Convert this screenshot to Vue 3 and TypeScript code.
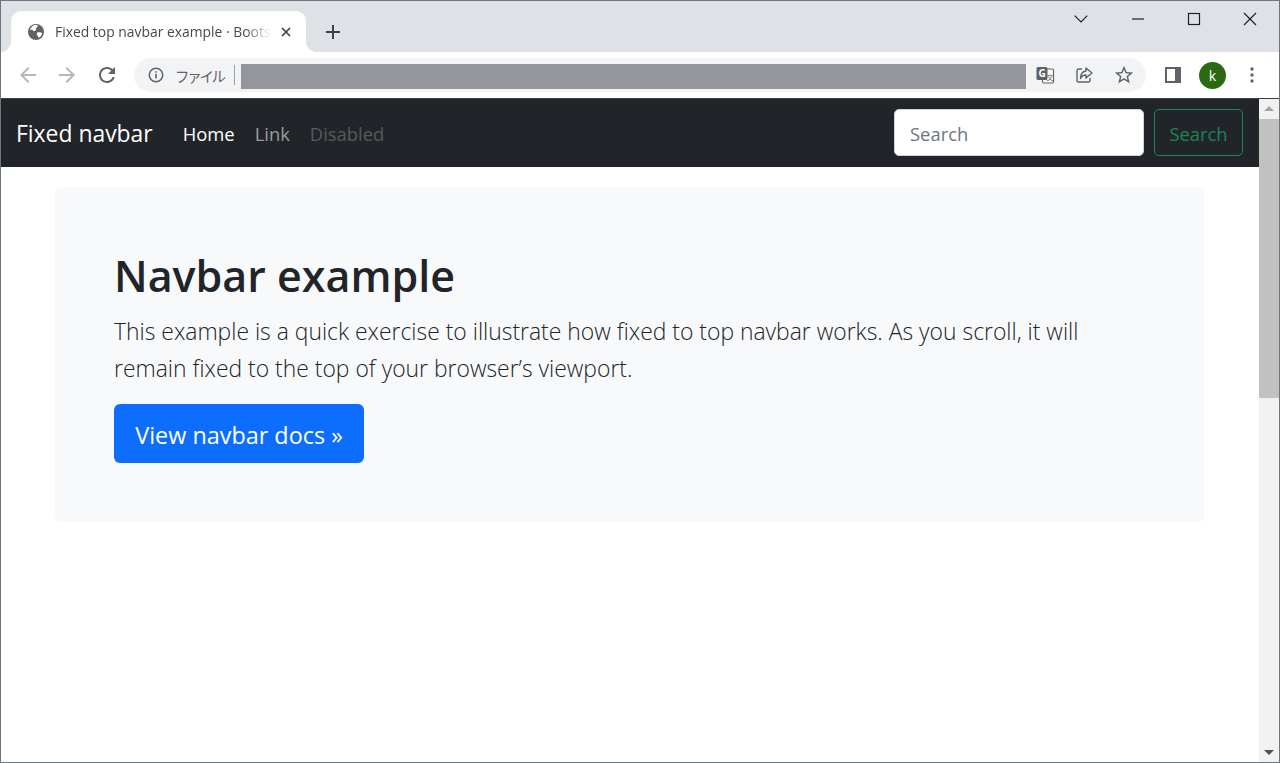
<script setup lang="ts">
const navLinks = [
  { label: 'Home', state: 'active' },
  { label: 'Link', state: '' },
  { label: 'Disabled', state: 'disabled' }
]
</script>

<template>
  <div class="window">
    <div class="tabstrip">
      <div class="tab">
        <svg class="favicon" viewBox="0 0 16 16" width="16" height="16">
          <circle cx="8" cy="8" r="8" fill="#5f6368" />
          <path d="M6.6 1.1 9.4 1 9.6 2.700 7.700 4.600 8.300 6 5.700 7.200 4 5.600 2 6.200C2.600 3.700 4.300 1.800 6.600 1.100zM9.500 8.300h3.200l1.500 1.200c-.5 1.900-1.700 3.300-3.400 4.200L9.700 12 8.700 10z" fill="#fff" />
        </svg>
        <span class="tab-title">Fixed top navbar example · Boots</span>
        <svg class="tab-close" viewBox="0 0 10 10" width="10" height="10">
          <path d="M1 1l8 8M9 1l-8 8" stroke="#3c4043" stroke-width="1.700" />
        </svg>
      </div>
      <svg class="new-tab" viewBox="0 0 16 16" width="16" height="16">
        <path d="M8 1v14M1 8h14" stroke="#3c4043" stroke-width="2" />
      </svg>
      <div class="window-controls">
        <svg class="ctl ctl-menu" viewBox="0 0 14 8" width="14" height="8">
          <path d="M.7.7 7 7 13.300.7" fill="none" stroke="#202124" stroke-width="1.200" />
        </svg>
        <svg class="ctl" viewBox="0 0 14 14" width="14" height="14">
          <path d="M1 7h12" stroke="#202124" stroke-width="1.200" />
        </svg>
        <svg class="ctl" viewBox="0 0 14 14" width="14" height="14">
          <rect x="1.500" y="1.500" width="11" height="11" fill="none" stroke="#202124" stroke-width="1.200" />
        </svg>
        <svg class="ctl" viewBox="0 0 14 14" width="14" height="14">
          <path d="M1 1l12 12M13 1 1 13" stroke="#202124" stroke-width="1.200" />
        </svg>
      </div>
    </div>

    <div class="toolbar">
      <svg class="tool" viewBox="0 0 24 24" width="24" height="24">
        <path d="M20 11H7.830l5.590-5.590L12 4l-8 8 8 8 1.410-1.410L7.830 13H20v-2z" fill="#b5b7ba" />
      </svg>
      <svg class="tool" viewBox="0 0 24 24" width="24" height="24">
        <path d="M12 4l-1.410 1.410L16.170 11H4v2h12.170l-5.580 5.590L12 20l8-8z" fill="#b5b7ba" />
      </svg>
      <svg class="tool tool-reload" viewBox="0 0 24 24" width="24" height="24">
        <path d="M17.650 6.350C16.200 4.900 14.210 4 12 4c-4.420 0-7.990 3.580-7.990 8s3.570 8 7.990 8c3.730 0 6.840-2.550 7.730-6h-2.080c-.82 2.330-3.040 4-5.650 4-3.310 0-6-2.690-6-6s2.690-6 6-6c1.660 0 3.140.69 4.220 1.780L13 11h7V4l-2.350 2.350z" fill="#5f6368" />
      </svg>
      <div class="omnibox">
        <svg class="info" viewBox="0 0 16 16" width="16" height="16">
          <circle cx="8" cy="8" r="6.700" fill="none" stroke="#5f6368" stroke-width="1.500" />
          <path d="M7.200 7h1.600v4.600H7.200zM7.200 4.200h1.600v1.600H7.200z" fill="#5f6368" />
        </svg>
        <span class="scheme">ファイル</span>
        <span class="sep"></span>
        <div class="url-mask"></div>
        <svg class="omni-icon translate" viewBox="0 0 20 20" width="20" height="20">
          <rect x="7.500" y="4" width="11" height="14" rx="1.500" fill="#fff" stroke="#5f6368" stroke-width="1.200" />
          <rect x="1.500" y="2" width="11" height="13" rx="1.500" fill="#5f6368" />
          <text x="7" y="12" class="translate-g">G</text>
          <text x="15" y="15" class="translate-z">文</text>
        </svg>
        <svg class="omni-icon" viewBox="0 0 20 20" width="20" height="20">
          <path d="M8 4H4.500A1.500 1.500 0 0 0 3 5.500v10A1.500 1.500 0 0 0 4.500 17h10a1.500 1.500 0 0 0 1.500-1.500V13" fill="none" stroke="#5f6368" stroke-width="1.400" />
          <path d="M12 3l6 5-6 5v-3C9.500 10 7.500 11 6.500 13.500 6.500 9.500 8.500 6.500 12 6z" fill="none" stroke="#5f6368" stroke-width="1.400" stroke-linejoin="round" />
        </svg>
        <svg class="omni-icon" viewBox="0 0 24 24" width="22" height="22">
          <path d="M22 9.240l-7.190-.62L12 2 9.190 8.630 2 9.240l5.460 4.730L5.820 21 12 17.270 18.180 21l-1.630-7.030L22 9.240zM12 15.400l-3.760 2.270 1-4.280-3.320-2.880 4.380-.38L12 6.100l1.710 4.040 4.380.38-3.320 2.880 1 4.280L12 15.400z" fill="#5f6368" />
        </svg>
      </div>
      <svg class="side-panel" viewBox="0 0 18 18" width="18" height="18">
        <rect x="1" y="1" width="16" height="16" fill="#5f6368" />
        <rect x="3" y="3" width="8" height="12" fill="#fff" />
      </svg>
      <span class="avatar">k</span>
      <svg class="menu-dots" viewBox="0 0 4 16" width="4" height="16">
        <circle cx="2" cy="2" r="1.700" fill="#5f6368" />
        <circle cx="2" cy="8" r="1.700" fill="#5f6368" />
        <circle cx="2" cy="14" r="1.700" fill="#5f6368" />
      </svg>
    </div>

    <div class="viewport">
      <div class="page">
        <nav class="navbar">
          <a class="brand">Fixed navbar</a>
          <ul class="nav-links">
            <li v-for="link in navLinks" :key="link.label" :class="link.state">{{ link.label }}</li>
          </ul>
          <form class="search" @submit.prevent>
            <input class="search-input" type="text" placeholder="Search" />
            <button class="search-btn" type="button">Search</button>
          </form>
        </nav>
        <main class="hero">
          <h1>Navbar example</h1>
          <p class="lead">This example is a quick exercise to illustrate how fixed to top navbar works. As you scroll, it will remain fixed to the top of your browser’s viewport.</p>
          <a class="btn-docs">View navbar docs »</a>
        </main>
      </div>
      <div class="scrollbar">
        <span class="arrow arrow-up"></span>
        <div class="track"><div class="thumb"></div></div>
        <span class="arrow arrow-down"></span>
      </div>
    </div>
  </div>
</template>

<style>
html, body {
  margin: 0;
  overflow: hidden;
}
</style>

<style scoped>
.window {
  box-sizing: border-box;
  width: 1280px;
  height: 763px;
  border: 1px solid #70757a;
  display: flex;
  flex-direction: column;
  font-family: "Open Sans", "Noto Sans", "Noto Sans CJK JP", sans-serif;
  background: #fff;
  overflow: hidden;
}

.tabstrip {
  height: 51px;
  flex: none;
  background: #dee1e6;
  display: flex;
  align-items: flex-end;
  padding-left: 10px;
}

.tab {
  position: relative;
  box-sizing: border-box;
  width: 295px;
  height: 41px;
  background: #fff;
  border-radius: 10px 10px 0 0;
  display: flex;
  align-items: center;
  padding: 0 0 0 17px;
}

.tab::before,
.tab::after {
  content: "";
  position: absolute;
  bottom: 0;
  width: 10px;
  height: 10px;
}

.tab::before {
  left: -10px;
  background: radial-gradient(circle at 0 0, #dee1e6 9.5px, #fff 10px);
}

.tab::after {
  right: -10px;
  background: radial-gradient(circle at 100% 0, #dee1e6 9.5px, #fff 10px);
}

.favicon {
  flex: none;
}

.tab-title {
  width: 216px;
  margin-left: 11px;
  font-size: 13.9px;
  color: #45494e;
  white-space: nowrap;
  -webkit-mask-image: linear-gradient(to right, #000 190px, transparent 216px);
  mask-image: linear-gradient(to right, #000 190px, transparent 216px);
}

.tab-close {
  margin-left: 10px;
}

.new-tab {
  margin: 0 0 12px 19px;
}

.window-controls {
  margin-left: auto;
  align-self: flex-start;
  display: flex;
  align-items: center;
  gap: 42px;
  padding: 11px 22px 0 0;
  height: 14px;
}

.ctl-menu {
  margin-right: 1px;
}

.toolbar {
  height: 46px;
  flex: none;
  display: flex;
  align-items: center;
  padding-left: 15px;
  background: #fff;
}

.tool {
  flex: none;
  margin-right: 15px;
}

.tool-reload {
  margin-left: 1px;
}

.omnibox {
  flex: none;
  width: 1012px;
  height: 34px;
  border-radius: 17px;
  background: #f1f3f4;
  display: flex;
  align-items: center;
  padding-left: 14px;
  box-sizing: border-box;
}

.scheme {
  flex: none;
  width: 49px;
  margin-left: 11px;
  font-size: 14.5px;
  letter-spacing: -2.300px;
  color: #5f6368;
  white-space: nowrap;
  font-family: "Noto Sans CJK JP", sans-serif;
}

.sep {
  flex: none;
  width: 1px;
  height: 20px;
  margin-left: 10px;
  background: #9aa0a6;
}

.url-mask {
  flex: none;
  width: 785px;
  height: 25px;
  margin: 2px 0 0 6px;
  background: #95969b;
}

.omni-icon {
  flex: none;
  margin-left: 19px;
}

.translate {
  margin-left: 9px;
}

.translate-g {
  font-size: 10px;
  font-weight: 700;
  fill: #fff;
  text-anchor: middle;
}

.translate-z {
  font-size: 7px;
  fill: #5f6368;
  text-anchor: middle;
  font-family: "Noto Sans CJK JP", sans-serif;
}

.side-panel {
  flex: none;
  margin-left: 18px;
}

.avatar {
  flex: none;
  width: 27px;
  height: 27px;
  margin-left: 17px;
  border-radius: 50%;
  background: #2b6a12;
  color: #fff;
  font-size: 14px;
  line-height: 27px;
  text-align: center;
}

.menu-dots {
  flex: none;
  margin-left: 24px;
}

.viewport {
  flex: 1;
  min-height: 0;
  display: flex;
  border-top: 1px solid #3c4043;
}

.page {
  flex: 1;
  min-width: 0;
  background: #fff;
}

.navbar {
  height: 68px;
  background: #212529;
  display: flex;
  align-items: center;
  padding: 0 16px 0 15px;
}

.brand {
  font-size: 22.9px;
  color: #fff;
  white-space: nowrap;
}

.nav-links {
  list-style: none;
  display: flex;
  gap: 20px;
  margin: 0 0 0 30px;
  padding: 0;
  font-size: 18.4px;
  color: rgba(255, 255, 255, 0.55);
}

.nav-links .active {
  color: #fff;
}

.nav-links .disabled {
  color: rgba(255, 255, 255, 0.25);
}

.search {
  margin-left: auto;
  margin-bottom: 1px;
  display: flex;
  gap: 10px;
}

.search-input {
  box-sizing: border-box;
  width: 250px;
  height: 47px;
  padding: 2px 20px 0 15px;
  border: 1px solid #ced4da;
  border-radius: 5px;
  background: #fff;
  font: inherit;
  font-size: 18.4px;
  outline: none;
}

.search-input::placeholder {
  color: #6c757d;
  opacity: 1;
}

.search-btn {
  box-sizing: border-box;
  width: 89px;
  height: 47px;
  padding: 2px 0 0;
  border: 1px solid #198754;
  border-radius: 5px;
  background: transparent;
  color: #198754;
  font: inherit;
  font-size: 18.4px;
}

.hero {
  box-sizing: border-box;
  width: 1149px;
  height: 335px;
  margin: 20px 0 0 54px;
  padding: 59px 59px;
  background: #f8f9fa;
  border-radius: 5px;
}

h1 {
  margin: 0 0 7px;
  font-size: 43px;
  font-weight: 600;
  line-height: 60px;
  color: #212529;
}

.lead {
  margin: 0 0 17px;
  font-size: 22.9px;
  font-weight: 300;
  line-height: 37px;
  color: #212529;
}

.btn-docs {
  display: inline-block;
  box-sizing: border-box;
  width: 250px;
  height: 59px;
  line-height: 62px;
  text-align: center;
  border-radius: 6px;
  background: #0d6efd;
  color: #fff;
  font-size: 23.4px;
}

.scrollbar {
  flex: none;
  width: 20px;
  background: #f1f1f1;
  display: flex;
  flex-direction: column;
  align-items: stretch;
}

.arrow {
  flex: none;
  height: 20px;
  position: relative;
}

.arrow::after {
  content: "";
  position: absolute;
  left: 5px;
  border-left: 5px solid transparent;
  border-right: 5px solid transparent;
}

.arrow-up::after {
  top: 7px;
  border-bottom: 5px solid #a3a3a3;
}

.arrow-down::after {
  bottom: 7px;
  border-top: 5px solid #505050;
}

.track {
  flex: 1;
}

.thumb {
  height: 279px;
  background: #c1c1c1;
}
</style>
